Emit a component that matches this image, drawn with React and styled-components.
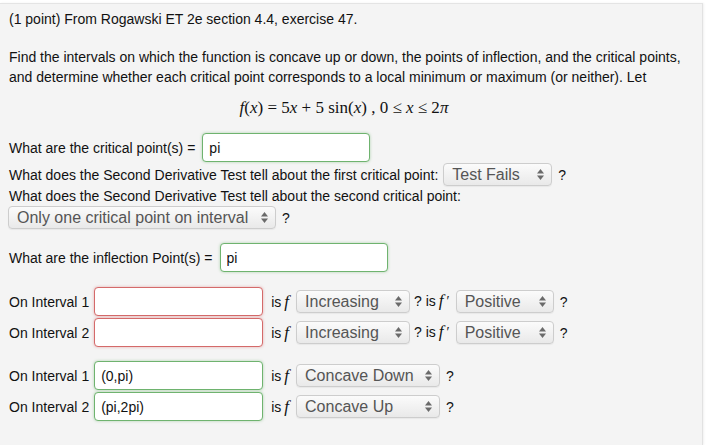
import styled, { createGlobalStyle } from "styled-components";

const GlobalStyle = createGlobalStyle`
  html, body {
    margin: 0;
    padding: 0;
    background: #ffffff;
  }
  body {
    font-family: "Liberation Sans", Arial, sans-serif;
    font-size: 14px;
    color: #111;
  }
`;

const Panel = styled.div`
  margin-top: 3px;
  width: 703px;
  height: 442px;
  box-sizing: border-box;
  background: #f4f4f4;
  border-top: 1px solid #e4e4e4;
  border-right: 1px solid #e2e2e2;
  box-shadow: 1px 0 2px rgba(0, 0, 0, 0.06);
  padding: 5px 9px 0 9px;
  line-height: 20px;
`;

const Para = styled.p`
  margin: 0;
  margin-top: ${(p) => p.$mt || 0}px;
`;

const Formula = styled.div`
  margin-top: 11px;
  text-align: center;
  font-family: "Liberation Serif", "Times New Roman", serif;
  font-size: 17px;
  line-height: 20px;
  padding-right: 14px;
  i {
    font-style: italic;
  }
`;

const Row = styled.div`
  display: flex;
  align-items: center;
  margin-top: ${(p) => p.$mt || 0}px;
  min-height: ${(p) => p.$h || 20}px;
`;

const Label = styled.span`
  white-space: nowrap;
`;

const TextInput = styled.input`
  box-sizing: border-box;
  width: ${(p) => p.$w || 168}px;
  height: 29px;
  margin-left: ${(p) => p.$ml ?? 6}px;
  padding: 0 6px;
  background: #fff;
  font-family: "Liberation Sans", Arial, sans-serif;
  font-size: 14px;
  color: #111;
  border-radius: 4px;
  outline: none;
  border: 1px solid ${(p) => (p.$bad ? "#d46a6a" : "#6fb36f")};
  box-shadow: 0 0 3px
    ${(p) => (p.$bad ? "rgba(212, 90, 90, 0.45)" : "rgba(90, 170, 90, 0.45)")};
`;

const SelectWrap = styled.span`
  position: relative;
  display: inline-flex;
  margin-left: ${(p) => p.$ml ?? 6}px;
`;

const Select = styled.select`
  appearance: none;
  -webkit-appearance: none;
  box-sizing: border-box;
  width: ${(p) => p.$w}px;
  height: 23px;
  padding: 0 22px 0 8px;
  font-family: "Liberation Sans", Arial, sans-serif;
  font-size: 16px;
  color: #555;
  border: 1px solid #cdcdcd;
  border-radius: 4px;
  background: linear-gradient(#fbfbfb, #e9e9e9);
  box-shadow: 0 1px 1px rgba(0, 0, 0, 0.05);
  outline: none;
`;

const Arrows = styled.svg`
  position: absolute;
  right: 8px;
  top: 6px;
  pointer-events: none;
`;

const Q = styled.span`
  margin-left: 6px;
`;

const IsF = styled.span`
  margin-left: ${(p) => p.$ml ?? 8}px;
  white-space: nowrap;
  i {
    font-family: "Liberation Serif", "Times New Roman", serif;
    font-size: 17px;
    margin-left: 3px;
  }
  sup {
    font-family: "Liberation Serif", "Times New Roman", serif;
    font-size: 14px;
    margin-left: 3px;
    vertical-align: 0;
  }
`;

function Dropdown({ value, options, width, ml }) {
  return (
    <SelectWrap $ml={ml}>
      <Select $w={width} defaultValue={value}>
        {options.map((o) => (
          <option key={o} value={o}>
            {o}
          </option>
        ))}
      </Select>
      <Arrows width="7" height="11" viewBox="0 0 7 11">
        <path d="M3.5 0 L7 4.5 L0 4.5 Z" fill="#6a6a6a" />
        <path d="M3.5 11 L7 6.5 L0 6.5 Z" fill="#6a6a6a" />
      </Arrows>
    </SelectWrap>
  );
}

const testOpts = ["?", "Local Minimum", "Local Maximum", "Test Fails", "Only one critical point on interval"];
const incOpts = ["?", "Increasing", "Decreasing"];
const signOpts = ["?", "Positive", "Negative"];
const concOpts = ["?", "Concave Up", "Concave Down"];

function IncreasingRow({ n, mt }) {
  return (
    <Row $mt={mt} $h={29}>
      <Label>On Interval {n}</Label>
      <TextInput $bad $ml={5} $w={169} />
      <IsF>
        is<i>f</i>
      </IsF>
      <Dropdown value="Increasing" options={incOpts} width={114} ml={7} />
      <IsF $ml={4}>
        ? is<i>f</i>
        <sup>′</sup>
      </IsF>
      <Dropdown value="Positive" options={signOpts} width={98} ml={6} />
      <Q>?</Q>
    </Row>
  );
}

function ConcavityRow({ n, mt, interval, value }) {
  return (
    <Row $mt={mt} $h={29}>
      <Label>On Interval {n}</Label>
      <TextInput defaultValue={interval} $ml={5} $w={169} />
      <IsF>
        is<i>f</i>
      </IsF>
      <Dropdown value={value} options={concOpts} width={144} ml={7} />
      <Q>?</Q>
    </Row>
  );
}

export default function App() {
  return (
    <>
      <GlobalStyle />
      <Panel>
        <Para>(1 point) From Rogawski ET 2e section 4.4, exercise 47.</Para>
        <Para $mt={18}>
          Find the intervals on which the function is concave up or down, the points of inflection, and the critical points,
          and determine whether each critical point corresponds to a local minimum or maximum (or neither). Let
        </Para>
        <Formula>
          <i>f</i>(<i>x</i>) = 5<i>x</i> + 5 sin(<i>x</i>) , 0 ≤ <i>x</i> ≤ 2<i>π</i>
        </Formula>

        <Row $mt={15} $h={29}>
          <Label>What are the critical point(s) =</Label>
          <TextInput defaultValue="pi" $ml={7} />
        </Row>
        <Row $mt={1} $h={23}>
          <Label>What does the Second Derivative Test tell about the first critical point:</Label>
          <Dropdown value="Test Fails" options={testOpts} width={109} ml={5} />
          <Q>?</Q>
        </Row>
        <Row $h={20}>
          <Label>What does the Second Derivative Test tell about the second critical point:</Label>
        </Row>
        <Row $h={23}>
          <Dropdown value="Only one critical point on interval" options={testOpts} width={268} ml={-1} />
          <Q>?</Q>
        </Row>

        <Row $mt={14} $h={29}>
          <Label>What are the inflection Point(s) =</Label>
          <TextInput defaultValue="pi" $ml={7} />
        </Row>

        <IncreasingRow n={1} mt={15} />
        <IncreasingRow n={2} mt={2} />

        <ConcavityRow n={1} mt={14} interval="(0,pi)" value="Concave Down" />
        <ConcavityRow n={2} mt={2} interval="(pi,2pi)" value="Concave Up" />
      </Panel>
    </>
  );
}
